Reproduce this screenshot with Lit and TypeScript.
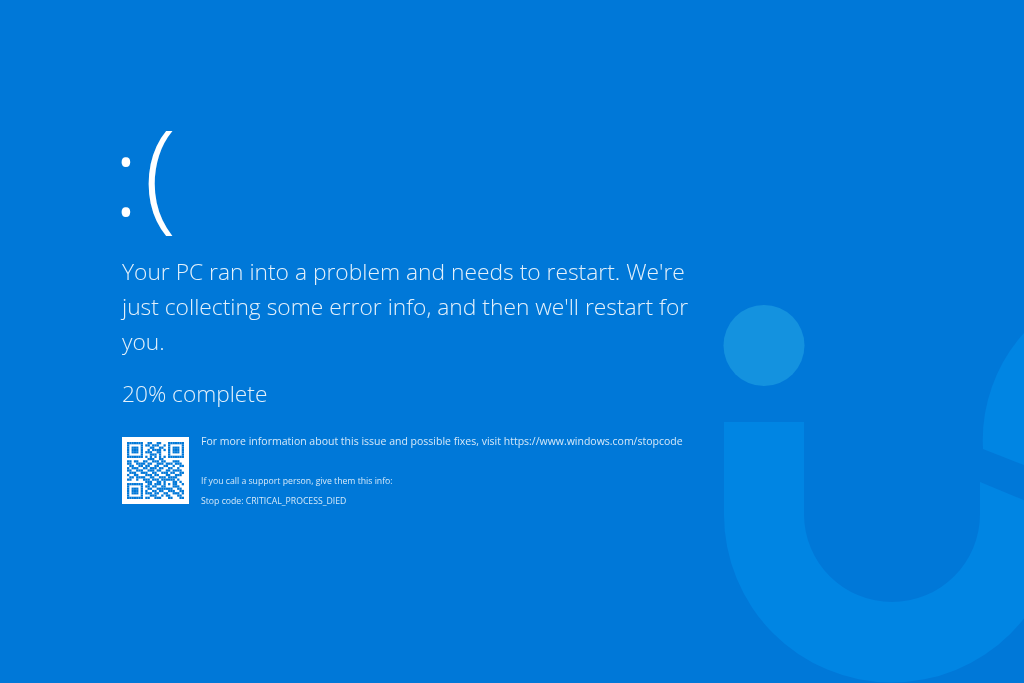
import { LitElement, html, css, svg } from 'lit';
import { customElement } from 'lit/decorators.js';

// 25x25 modules, the quiet zone comes from the viewBox offset
const QR_ROWS = [
  '1111111001100110001111111',
  '1000001011011100101000001',
  '1011101000110011001011101',
  '1011101001011110101011101',
  '1011101011100110001011101',
  '1000001000111010001000001',
  '1111111010101010101111111',
  '0000000001110011000000000',
  '1101100110011101100011100',
  '1100111101100111011101110',
  '0110011011001100110010011',
  '1011100110111011001100100',
  '1100111001110110011011110',
  '0111001110011001110110011',
  '1001100011101100011001110',
  '0110111100110011101111000',
  '1100100111011101111110100',
  '0000000011100110100011010',
  '1111111001101110101011001',
  '1000001011011001100011100',
  '1011101001100111111100110',
  '1011101010011011001110011',
  '1011101011101100110011101',
  '1000001000111001011000110',
  '1111111011001110001100011',
];

@customElement('app-root')
export class AppRoot extends LitElement {
  static styles = css`
    :host {
      display: block;
      position: relative;
      width: 1024px;
      height: 683px;
      overflow: hidden;
      background: #0078d8;
      color: #e4f1fb;
      font-family: 'Open Sans', 'Noto Sans', sans-serif;
    }
    .watermark {
      position: absolute;
      inset: 0;
    }
    .content {
      position: relative;
      display: flex;
      flex-direction: column;
      padding: 100px 0 0 113px;
      filter: blur(0.45px);
    }
    .face {
      display: flex;
      height: 146px;
      font-weight: 300;
      line-height: 142px;
      color: #fff;
      white-space: nowrap;
    }
    .colon {
      margin-top: 4px;
      font-size: 108px;
    }
    .paren {
      margin-left: 5px;
      font-size: 120px;
    }
    .message {
      margin: 8px 0 0 9px;
      width: 590px;
      font-size: 22.8px;
      font-weight: 300;
      line-height: 35px;
    }
    .progress {
      margin: 17px 0 0 9px;
      font-size: 22.7px;
      font-weight: 300;
      line-height: 35px;
    }
    .details {
      display: flex;
      gap: 12px;
      margin: 26px 0 0 9px;
    }
    .qr {
      display: block;
      width: 67px;
      height: 67px;
      background: #fff;
      filter: blur(0.6px);
    }
    .lines {
      display: flex;
      flex-direction: column;
      color: #d5e9f9;
    }
    .more {
      margin-top: -2px;
      margin-bottom: 28px;
      font-size: 10.5px;
      line-height: 12px;
    }
    .small {
      font-size: 8.7px;
      line-height: 12px;
      margin-bottom: 8px;
    }
  `;

  renderQr() {
    const cells = QR_ROWS.flatMap((row, y) =>
      [...row].map((c, x) => (c === '1' ? svg`<rect x=${x} y=${y} width="1" height="1"></rect>` : null))
    );
    return html`<svg class="qr" viewBox="-2.2 -2.2 29.4 29.4" fill="#0078d8">${cells}</svg>`;
  }

  render() {
    return html`
      <svg class="watermark" viewBox="0 0 1024 683" width="1024" height="683">
        <circle cx="764" cy="345.5" r="40.5" fill="#1492df"></circle>
        <path d="M724 422H804V514A88 88 0 0 0 980 514V482L1060 515A168 168 0 0 1 724 514Z" fill="#0085e3"></path>
        <path d="M983 449A160 160 0 0 1 1024 333V465Z" fill="#0085e3"></path>
      </svg>
      <div class="content">
        <div class="face"><span class="colon">:</span><span class="paren">(</span></div>
        <div class="message">Your PC ran into a problem and needs to restart. We're just collecting some error info, and then we'll restart for you.</div>
        <div class="progress">20% complete</div>
        <div class="details">
          ${this.renderQr()}
          <div class="lines">
            <div class="more">For more information about this issue and possible fixes, visit https://www.windows.com/stopcode</div>
            <div class="small">If you call a support person, give them this info:</div>
            <div class="small">Stop code: CRITICAL_PROCESS_DIED</div>
          </div>
        </div>
      </div>
    `;
  }
}
